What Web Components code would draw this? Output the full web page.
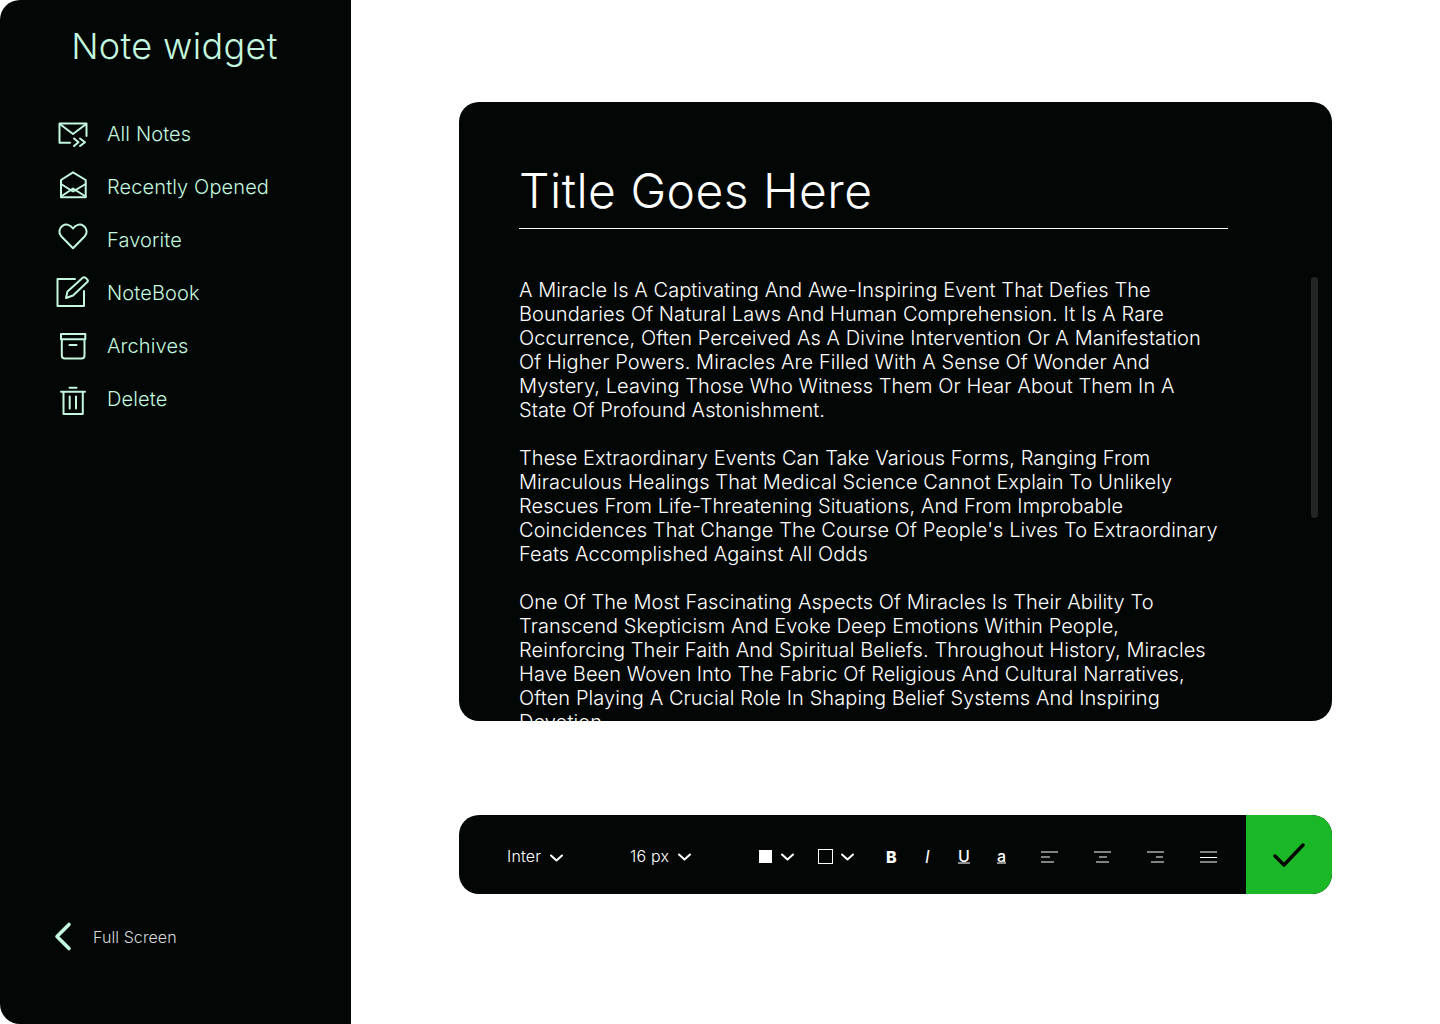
<!DOCTYPE html>
<html><head><meta charset="utf-8"><style>
html,body{margin:0;background:#fff}
body{width:1440px;height:1024px;overflow:hidden;display:flex;font-family:Inter,sans-serif}
</style></head><body>
<note-sidebar>
  <nav-item icon="mail">All Notes</nav-item>
  <nav-item icon="open">Recently Opened</nav-item>
  <nav-item icon="heart">Favorite</nav-item>
  <nav-item icon="edit">NoteBook</nav-item>
  <nav-item icon="box">Archives</nav-item>
  <nav-item icon="trash">Delete</nav-item>
</note-sidebar>
<note-main>
  <note-card>
    <span slot="title">Title Goes Here</span>
    <p>A Miracle Is A Captivating And Awe-Inspiring Event That Defies The Boundaries Of Natural Laws And Human Comprehension. It Is A Rare Occurrence, Often Perceived As A Divine Intervention Or A Manifestation Of Higher Powers. Miracles Are Filled With A Sense Of Wonder And Mystery, Leaving Those Who Witness Them Or Hear About Them In A State Of Profound Astonishment.</p>
    <p>These Extraordinary Events Can Take Various Forms, Ranging From Miraculous Healings That Medical Science Cannot Explain To Unlikely Rescues From Life-Threatening Situations, And From Improbable Coincidences That Change The Course Of People's Lives To Extraordinary Feats Accomplished Against All Odds</p>
    <p>One Of The Most Fascinating Aspects Of Miracles Is Their Ability To Transcend Skepticism And Evoke Deep Emotions Within People, Reinforcing Their Faith And Spiritual Beliefs. Throughout History, Miracles Have Been Woven Into The Fabric Of Religious And Cultural Narratives, Often Playing A Crucial Role In Shaping Belief Systems And Inspiring Devotion.</p>
  </note-card>
  <note-toolbar></note-toolbar>
</note-main>
<script>
const S='#c3f7df';
const ic={
mail:'<path d="M17 28.700H6.500V9.500H33.500V22"/><path d="M6.800 10 20 20 33.200 10"/><path d="M21 24.500l4.500 3.700-4.500 3.800M27 24.500l5 3.700-5 3.800"/>',
open:'<path d="M8 30.300V13L20 5.300 32.700 13V30.300z"/><path d="M8 17l12 7.500L32.700 17M8 29.500l12-8 12.700 8"/>',
heart:'<path d="M20 28.300 8.200 16.200C5.300 13 6 8 9.500 5.800 13 3.500 17.500 4.700 20 8.500 22.500 4.700 27 3.500 30.500 5.800 34 8 34.700 13 31.800 16.200z"/>',
edit:'<path d="M22 6H4.500V33H31V18"/><path d="M13 25l1.500-6.500L30 4.500c1.300-1.200 5.500 1.800 4.800 4L20 22.500z"/>',
box:'<path d="M8 8h24.300v5.200H8zM8.800 13.200V29.500a3 3 0 0 0 3 3H28.500a3 3 0 0 0 3-3V13.200M16.500 19h7"/>',
trash:'<path d="M16.500 8.800h7M8 12.800h24M10.500 12.800V35H29.800V12.800M16.700 17.500v12M23 17.500v12"/>'};
const chev=(y=0)=>`<svg style="margin-top:${y}px" width="13" height="8" viewBox="0 0 13 8" fill="none" stroke="#fff" stroke-width="2" stroke-linecap="round" stroke-linejoin="round"><path d="M1 1.500l5.500 5 5.500-5"/></svg>`;
const align=(a,b,c,m='#fff')=>`<svg width="18" height="15" viewBox="0 0 18 15" fill="none" stroke-width="1" style="display:block"><path stroke="#fff" d="${a}"/><path stroke="${m}" d="${b}"/><path stroke="#fff" d="${c}"/></svg>`;

class NavItem extends HTMLElement{
  constructor(){super();this.attachShadow({mode:'open'})}
  connectedCallback(){this.shadowRoot.innerHTML=`<style>
  :host{display:flex;align-items:center;height:53px;color:${S};font-size:20px;font-weight:300;letter-spacing:.12px;line-height:24px}
  svg{display:block;width:40px;height:40px;margin:0 14px 0 0;flex:none}
  </style><svg viewBox="0 0 40 40" fill="none" stroke="${S}" stroke-width="2" stroke-linecap="round" stroke-linejoin="round">${ic[this.getAttribute('icon')]}</svg><slot></slot>`}
}
customElements.define('nav-item',NavItem);

class NoteSidebar extends HTMLElement{
  constructor(){super();this.attachShadow({mode:'open'}).innerHTML=`<style>
  :host{display:flex;flex-direction:column;box-sizing:border-box;width:351px;height:1024px;background:#020605;border-radius:20px 0 0 20px;padding:0 0 71px 53px;flex:none}
  h1{margin:0 0 0 -55px;padding-top:24px;height:107px;box-sizing:border-box;text-align:center;font:300 36px/44px Inter,sans-serif;color:${S};letter-spacing:.35px}
  nav{display:flex;flex-direction:column}
  footer{margin-top:auto;display:flex;align-items:center;color:#d9d9d9;font-size:16px;font-weight:300;letter-spacing:.08px;line-height:20px;gap:20px}
  footer svg{display:block;flex:none}
  </style><h1>Note widget</h1><nav><slot></slot></nav>
  <footer><svg width="20" height="32" viewBox="0 0 20 32" fill="none" stroke="${S}" stroke-width="3.600" stroke-linecap="round" stroke-linejoin="round"><path d="M16 3.500 4 15.500l12 12"/></svg><span>Full Screen</span></footer>`}
}
customElements.define('note-sidebar',NoteSidebar);

class NoteMain extends HTMLElement{
  constructor(){super();this.attachShadow({mode:'open'}).innerHTML=`<style>
  :host{display:flex;flex-direction:column;gap:94px;padding:102px 108px 0;width:873px;flex:none}
  </style><slot></slot>`}
}
customElements.define('note-main',NoteMain);

class NoteCard extends HTMLElement{
  constructor(){super();this.attachShadow({mode:'open'}).innerHTML=`<style>
  :host{display:block;position:relative;box-sizing:border-box;height:619px;background:#020605;border-radius:20px;overflow:hidden;padding:0 104px 0 60px;color:#fff}
  h2{margin:0;height:127px;box-sizing:border-box;padding:60px 0 0 0;border-bottom:1px solid #fff;font:300 48px/58px Inter,sans-serif;letter-spacing:.47px}
  .body{padding-top:49px;padding-right:4px;font-size:20px;font-weight:300;letter-spacing:.08px;line-height:24px}
  ::slotted(p){margin:0 0 24px}
  .bar{position:absolute;left:852px;top:175px;width:7px;height:241px;border-radius:4px;background:#222524}
  </style><h2><slot name="title"></slot></h2><div class="body"><slot></slot></div><div class="bar"></div>`}
}
customElements.define('note-card',NoteCard);

class NoteToolbar extends HTMLElement{
  constructor(){super();const w=[123,129,59,68,39,34,38,44,53,53,53,46];let n=0;const c=(h,st='')=>`<div class="c" style="width:${w[n++]}px;${st}">${h}</div>`;
  this.attachShadow({mode:'open'}).innerHTML=`<style>
  :host{display:flex;align-items:center;height:79px;background:#020605;border-radius:20px;overflow:hidden;color:#fff;font-size:16px;font-weight:300;line-height:20px}
  .tools{flex:1;display:flex;align-items:center;box-sizing:border-box;height:100%;padding:4px 0 0 48px;min-width:0}
  .c{display:flex;align-items:center;flex:none;gap:9px}
  .c svg{display:block}
  .t{margin-bottom:2px;letter-spacing:.2px}
  .sq{width:13px;height:13px;background:#fff;display:block}
  .oq{width:15px;height:15px;box-sizing:border-box;border:1.500px solid #fff;display:block}
  .u{display:block;padding-top:1px;line-height:12px;border-bottom:2px solid #8d8d8d;font-weight:500}
  .ok{width:86px;height:100%;background:#1ab726;display:flex;align-items:center;justify-content:center;flex:none}
  </style><div class="tools">
  ${c(`<span class="t">Inter</span>${chev(3.6)}`)}
  ${c(`<span class="t">16 px</span>${chev()}`)}
  ${c(`<i class="sq"></i>${chev()}`)}
  ${c(`<i class="oq"></i>${chev()}`,'gap:8px')}
  ${c(`<b style="font-weight:800">B</b>`)}
  ${c(`<i style="font-weight:400;font-size:17px">I</i>`)}
  ${c(`<span class="u" style="margin-left:-1px">U</span>`)}
  ${c(`<span class="u">a</span>`)}
  ${c(align('M0 3h17','M0 8h9','M0 13h13'))}
  ${c(align('M0 3h17','M5 8h8','M2 13h13'))}
  ${c(align('M0 3h17','M9 8h7','M4 13h13'))}
  ${c(align('M0 3h17','M0 8.500h17','M0 13h17'))}
  </div>
  <div class="ok"><svg width="32" height="26" viewBox="0 0 32 26" fill="none" stroke="#020605" stroke-width="3.500" stroke-linecap="round" stroke-linejoin="round"><path d="M2 14l9 9L30 3"/></svg></div>`}
}
customElements.define('note-toolbar',NoteToolbar);
</script></body></html>
